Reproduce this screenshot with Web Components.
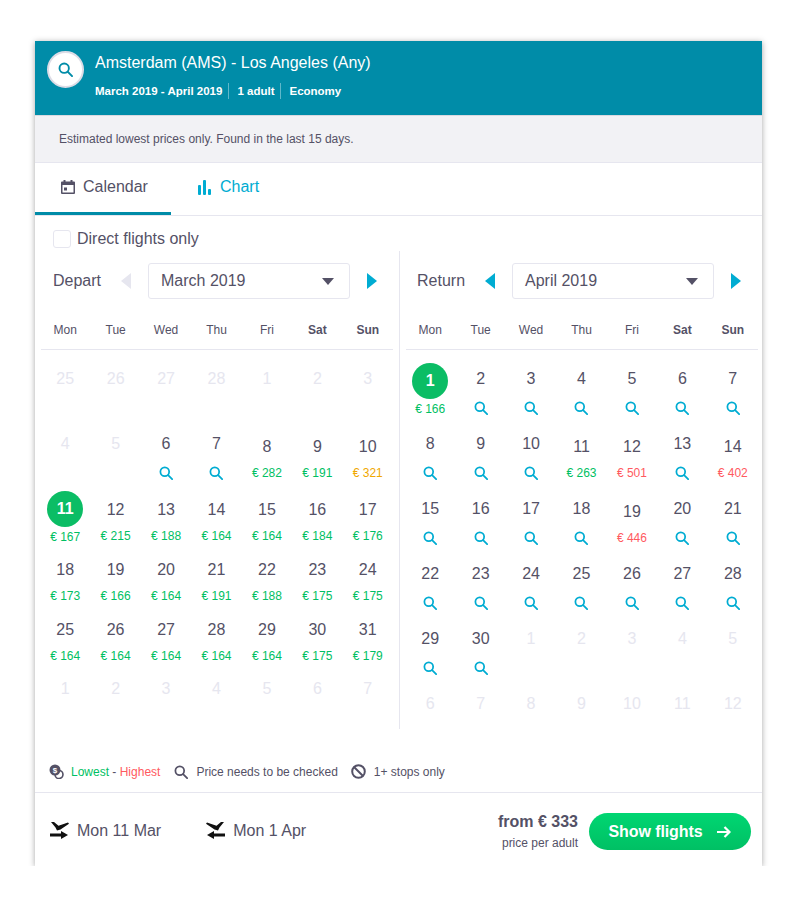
<!DOCTYPE html>
<html>
<head>
<meta charset="utf-8">
<title>Flights calendar</title>
<style>
    body {
        margin: 0;
        background: #fff;
        font-family: "Liberation Sans", Arial, sans-serif;
        color: #545166;
    }
</style>
</head>
<body>
<flight-card>
    <flight-header></flight-header>
    <notice-bar>Estimated lowest prices only. Found in the last 15 days.</notice-bar>
    <tab-bar></tab-bar>
    <direct-check>Direct flights only</direct-check>
    <calendar-pair></calendar-pair>
    <legend-bar></legend-bar>
    <summary-bar></summary-bar>
</flight-card>

<script>
const SEARCH = (size, color, width = 2) => `<svg width="${size}" height="${size}" viewBox="0 0 16 16" fill="none" stroke="${color}" stroke-width="${width}"><circle cx="6.6" cy="6.6" r="5"/><path d="M10.4 10.4L15 15" stroke-linecap="round"/></svg>`

class FlightCard extends HTMLElement {
    connectedCallback() {
        let shadowRoot = this.attachShadow({ mode: 'open' })
        shadowRoot.innerHTML = `
        <style>
            :host {
                display: block;
                width: 727px;
                margin: 41px 0 0 35px;
                background: #fff;
                box-shadow: 0 1px 6px rgba(0, 0, 0, .35);
            }
        </style>
        <slot></slot>
        `
    }
}
customElements.define('flight-card', FlightCard)

class FlightHeader extends HTMLElement {
    connectedCallback() {
        let shadowRoot = this.attachShadow({ mode: 'open' })
        shadowRoot.innerHTML = `
        <style>
            :host {
                display: flex;
                height: 75px;
                box-sizing: border-box;
                padding: 10px 0 0 12px;
                background: #008ca8;
                color: #fff;
                border-bottom: 1px solid #d9d9e0;
            }
            .badge {
                width: 37px;
                height: 37px;
                box-sizing: border-box;
                border-radius: 50%;
                background: #fff;
                border: 2px solid #dcdce6;
                display: flex;
                align-items: center;
                justify-content: center;
                flex: none;
            }
            .text { margin: 1px 0 0 11px; }
            .title { font-size: 16px; line-height: 22px; }
            .meta {
                display: flex;
                margin-top: 9px;
                font-size: 11.5px;
                font-weight: bold;
                line-height: 16px;
            }
            .meta span + span {
                margin-left: 6px;
                padding-left: 8px;
                border-left: 1px solid #5fb8ca;
            }
        </style>
        <div class="badge">${SEARCH(15, '#008ca8')}</div>
        <div class="text">
            <div class="title">Amsterdam (AMS) - Los Angeles (Any)</div>
            <div class="meta"><span>March 2019 - April 2019</span><span>1 adult</span><span>Economy</span></div>
        </div>
        `
    }
}
customElements.define('flight-header', FlightHeader)

class NoticeBar extends HTMLElement {
    connectedCallback() {
        let shadowRoot = this.attachShadow({ mode: 'open' })
        shadowRoot.innerHTML = `
        <style>
            :host {
                display: flex;
                align-items: center;
                height: 47px;
                box-sizing: border-box;
                padding: 0 24px;
                background: #f2f2f5;
                border-bottom: 1px solid #e6e6ef;
                font-size: 12px;
            }
        </style>
        <slot></slot>
        `
    }
}
customElements.define('notice-bar', NoticeBar)

class TabBar extends HTMLElement {
    connectedCallback() {
        let shadowRoot = this.attachShadow({ mode: 'open' })
        shadowRoot.innerHTML = `
        <style>
            :host {
                display: flex;
                height: 53px;
                box-sizing: border-box;
                border-bottom: 1px solid #e6e6ef;
                font-size: 16px;
            }
            .tab {
                display: flex;
                align-items: center;
                gap: 8px;
                height: 50px;
                padding-bottom: 3px;
                box-sizing: content-box;
            }
            .active {
                width: 136px;
                padding-left: 26px;
                box-sizing: border-box;
                height: 52px;
                padding-bottom: 1px;
                border-bottom: 3px solid #008ca8;
            }
            .chart {
                margin-left: 27px;
                gap: 9px;
                color: #00acd2;
                height: 48px;
            }
        </style>
        <div class="tab active">
            <svg width="14" height="14" viewBox="0 0 14 14"><path fill="#545166" d="M2.5 0h2v1.5h5V0h2v1.5H13a1 1 0 0 1 1 1V13a1 1 0 0 1-1 1H1a1 1 0 0 1-1-1V2.500a1 1 0 0 1 1-1h1.500zM1.500 5v7.500h11V5zM3 7.500h3v3H3z"/></svg>
            <span>Calendar</span>
        </div>
        <div class="tab chart">
            <svg width="13" height="15" viewBox="0 0 13 15" fill="#00acd2"><rect x="0" y="5" width="3" height="10" rx="1"/><rect x="5" y="0" width="3" height="15" rx="1"/><rect x="10" y="9" width="3" height="6" rx="1"/></svg>
            <span>Chart</span>
        </div>
        `
    }
}
customElements.define('tab-bar', TabBar)

class DirectCheck extends HTMLElement {
    connectedCallback() {
        let shadowRoot = this.attachShadow({ mode: 'open' })
        shadowRoot.innerHTML = `
        <style>
            :host {
                display: flex;
                align-items: center;
                gap: 6px;
                height: 35px;
                box-sizing: border-box;
                padding: 10px 0 0 18px;
                font-size: 16px;
            }
            i {
                width: 16px;
                height: 16px;
                border: 1px solid #e6e6ef;
                border-radius: 3px;
                background: #fff;
            }
        </style>
        <i></i><slot></slot>
        `
    }
}
customElements.define('direct-check', DirectCheck)

class DayCell extends HTMLElement {
    connectedCallback() {
        let shadowRoot = this.attachShadow({ mode: 'open' })
        let kind = this.getAttribute('kind')
        let price = this.getAttribute('price')
        let tone = this.getAttribute('tone') || 'low'
        let sub = ''
        if (kind == 'search') sub = `<div class="sub">${SEARCH(14, '#00acd2')}</div>`
        if (price) sub = `<div class="sub ${tone}">€ ${price}</div>`
        shadowRoot.innerHTML = `
        <style>
            :host {
                display: flex;
                flex-direction: column;
                align-items: center;
                font-size: 16px;
            }
            .num {
                height: 30px;
                line-height: 32px;
            }
            .priced .num {
                height: 32px;
                line-height: 38px;
            }
            .off .num { color: #e6e6ef; }
            .sel .num {
                width: 36px;
                height: 36px;
                line-height: 36px;
                text-align: center;
                border-radius: 50%;
                background: #0bbd65;
                color: #fff;
                font-weight: bold;
            }
            .sub {
                height: 18px;
                margin-top: 6px;
                display: flex;
                align-items: center;
                font-size: 12px;
            }
            .low { color: #00bf63; }
            .mid { color: #f0a800; }
            .high { color: #ff5a5f; }
            .wrap {
                display: flex;
                flex-direction: column;
                align-items: center;
            }
            .priced .sub { margin-top: 4px; }
            .sel.priced .sub { margin-top: 1px; }
        </style>
        <div class="wrap ${kind || ''} ${price ? 'priced' : ''}">
            <div class="num"><slot></slot></div>
            ${sub}
        </div>
        `
    }
}
customElements.define('day-cell', DayCell)

class MonthPanel extends HTMLElement {
    set data(d) { this._d = d }
    connectedCallback() {
        let shadowRoot = this.attachShadow({ mode: 'open' })
        let d = this._d
        let tri = (dir, on) => `<svg width="10" height="16" viewBox="0 0 10 16"><path fill="${on ? '#00acd2' : '#e6e6ef'}" d="${dir == 'l' ? 'M10 0V16L0 8Z' : 'M0 0V16L10 8Z'}"/></svg>`
        let names = ['Mon', 'Tue', 'Wed', 'Thu', 'Fri', 'Sat', 'Sun']
        shadowRoot.innerHTML = `
        <style>
            :host {
                display: block;
                padding: 0 ${d.right}px 0 6px;
            }
            .top {
                display: flex;
                align-items: center;
                height: 36px;
                margin-top: 12px;
                padding-left: ${d.inset}px;
                font-size: 16px;
            }
            .label { width: 68px; }
            .select {
                display: flex;
                align-items: center;
                justify-content: space-between;
                box-sizing: border-box;
                width: 202px;
                height: 36px;
                margin: 0 17px 0 17px;
                padding: 0 15px 0 12px;
                border: 1px solid #e6e6ef;
                border-radius: 3px;
            }
            .caret {
                width: 0;
                height: 0;
                border: 6px solid transparent;
                border-top: 7px solid #545166;
                border-bottom: 0;
            }
            .rule {
                margin-top: 13px;
                border-bottom: 1px solid #e6e6ef;
            }
            .days, .grid {
                display: grid;
                grid-template-columns: repeat(7, 1fr);
                margin-left: -1px;
            }
            .days {
                height: 37px;
                align-items: center;
                padding-bottom: 1px;
                box-sizing: border-box;
                font-size: 12px;
                text-align: center;
            }
            .days .b { font-weight: bold; }
            .grid {
                margin-top: 13px;
                grid-template-rows: ${d.rows};
            }
        </style>
        <div class="top">
            <span class="label">${d.label}</span>
            ${tri('l', d.prev)}
            <div class="select"><span>${d.month}</span><i class="caret"></i></div>
            ${tri('r', true)}
        </div>
        <div class="rule">
            <div class="days">${names.map((n, i) => `<span class="${i > 4 ? 'b' : ''}">${n}</span>`).join('')}</div>
        </div>
        <div class="grid"><slot></slot></div>
        `
        for (let [num, kind, price, tone] of d.cells) {
            let cell = document.createElement('day-cell')
            if (kind) cell.setAttribute('kind', kind)
            if (price) cell.setAttribute('price', price)
            if (tone) cell.setAttribute('tone', tone)
            cell.textContent = num
            this.appendChild(cell)
        }
    }
}
customElements.define('month-panel', MonthPanel)

let off = n => [n, 'off']
let find = n => [n, 'search']
let fare = (n, p, t) => [n, '', p, t]

const MARCH = {
    label: 'Depart', month: 'March 2019', prev: false, inset: 12, right: 6,
    rows: '65px 63px 60px 60px 62px 30px',
    cells: [
        ...[25, 26, 27, 28, 1, 2, 3].map(off),
        off(4), off(5), find(6), find(7), fare(8, 282), fare(9, 191), fare(10, 321, 'mid'),
        [11, 'sel', 167], fare(12, 215), fare(13, 188), fare(14, 164), fare(15, 164), fare(16, 184), fare(17, 176),
        fare(18, 173), fare(19, 166), fare(20, 164), fare(21, 191), fare(22, 188), fare(23, 175), fare(24, 175),
        fare(25, 164), fare(26, 164), fare(27, 164), fare(28, 164), fare(29, 164), fare(30, 175), fare(31, 179),
        ...[1, 2, 3, 4, 5, 6, 7].map(off)
    ]
}
const APRIL = {
    label: 'Return', month: 'April 2019', prev: true, inset: 11, right: 4,
    rows: '65px 65px 65px 65px 65px 30px',
    cells: [
        [1, 'sel', 166], ...[2, 3, 4, 5, 6, 7].map(find),
        find(8), find(9), find(10), fare(11, 263), fare(12, 501, 'high'), find(13), fare(14, 402, 'high'),
        find(15), find(16), find(17), find(18), fare(19, 446, 'high'), find(20), find(21),
        ...[22, 23, 24, 25, 26, 27, 28].map(find),
        find(29), find(30), ...[1, 2, 3, 4, 5].map(off),
        ...[6, 7, 8, 9, 10, 11, 12].map(off)
    ]
}

class CalendarPair extends HTMLElement {
    connectedCallback() {
        let shadowRoot = this.attachShadow({ mode: 'open' })
        shadowRoot.innerHTML = `
        <style>
            :host {
                display: grid;
                grid-template-columns: 364px 363px;
                height: 478px;
            }
            .right { border-left: 1px solid #e6e6ef; }
        </style>
        <div class="left"></div>
        <div class="right"></div>
        `
        let left = document.createElement('month-panel')
        left.data = MARCH
        shadowRoot.querySelector('.left').appendChild(left)
        let right = document.createElement('month-panel')
        right.data = APRIL
        shadowRoot.querySelector('.right').appendChild(right)
    }
}
customElements.define('calendar-pair', CalendarPair)

class LegendBar extends HTMLElement {
    connectedCallback() {
        let shadowRoot = this.attachShadow({ mode: 'open' })
        shadowRoot.innerHTML = `
        <style>
            :host {
                display: flex;
                align-items: center;
                height: 64px;
                box-sizing: border-box;
                padding: 22px 0 0 14px;
                border-bottom: 1px solid #e6e6ef;
                font-size: 12px;
            }
            .low { color: #00bf63; }
            .high { color: #ff5a5f; }
            svg { flex: none; }
        </style>
        <svg width="15" height="15" viewBox="0 0 15 15"><circle cx="6" cy="6" r="5.500" fill="#545166"/><text x="6" y="9" font-size="8" font-weight="bold" fill="#fff" text-anchor="middle" font-family="Liberation Sans">$</text><path d="M10 6.500a4 4 0 1 1-4 4.500" fill="none" stroke="#545166" stroke-width="1.600"/></svg>
        <span style="margin-left:7px"><span class="low">Lowest</span> - <span class="high">Highest</span></span>
        <span style="margin-left:14px;display:flex">${SEARCH(14, '#545166')}</span>
        <span style="margin-left:8px">Price needs to be checked</span>
        <svg style="margin-left:13px" width="15" height="15" viewBox="0 0 15 15" fill="none" stroke="#545166" stroke-width="2"><circle cx="7.500" cy="7.500" r="6.300"/><path d="M3 3L12 12"/></svg>
        <span style="margin-left:8px">1+ stops only</span>
        `
    }
}
customElements.define('legend-bar', LegendBar)

class SummaryBar extends HTMLElement {
    connectedCallback() {
        let shadowRoot = this.attachShadow({ mode: 'open' })
        let plane = flip => `<svg width="19" height="18" viewBox="0 0 19 18" style="${flip ? 'transform:scaleX(-1)' : ''}"><path fill="#111" d="M1 0H4L8.500 3.800 18 .5 19 1.800 10.500 7.500 7 8.500 5.500 5.500z"/><path fill="#111" d="M0 11.500H11V9L18 13 11 17V14.500H0z"/></svg>`
        shadowRoot.innerHTML = `
        <style>
            :host {
                display: flex;
                align-items: center;
                height: 73px;
                box-sizing: border-box;
                padding: 4px 11px 0 15px;
                font-size: 16px;
            }
            .leg {
                display: flex;
                align-items: center;
                gap: 8px;
                margin-right: 45px;
                padding-bottom: 2px;
            }
            .price {
                margin-left: auto;
                text-align: right;
            }
            .from { font-size: 16px; font-weight: bold; }
            .per { font-size: 12px; margin-top: 5px; }
            .btn {
                display: flex;
                align-items: center;
                justify-content: center;
                gap: 15px;
                width: 162px;
                height: 37px;
                margin-left: 11px;
                border-radius: 19px;
                background: linear-gradient(#00d672, #00c064);
                color: #fff;
                font-weight: bold;
                letter-spacing: -.1px;
            }
        </style>
        <div class="leg">${plane(false)}<span>Mon 11 Mar</span></div>
        <div class="leg">${plane(true)}<span>Mon 1 Apr</span></div>
        <div class="price">
            <div class="from">from € 333</div>
            <div class="per">price per adult</div>
        </div>
        <div class="btn">
            <span>Show flights</span>
            <svg width="14" height="12" viewBox="0 0 14 12" fill="none" stroke="#fff" stroke-width="2.200"><path d="M0 6H12M7.500 1L12.500 6L7.500 11"/></svg>
        </div>
        `
    }
}
customElements.define('summary-bar', SummaryBar)
</script>
</body>
</html>
